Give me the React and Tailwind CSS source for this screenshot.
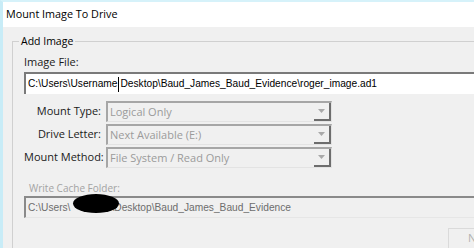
function Combo({ value }) {
  return (
    <div className="flex h-[21px] w-[226px] border-t-2 border-l-2 border-t-[#a6a6a6] border-l-[#a6a6a6] border-b border-r border-b-[#e3e3e3] border-r-[#e3e3e3] bg-[#f0f0f0]">
      <div className="flex-1 pl-[2px] text-[11px] leading-[18px] text-[#9b9b9b]">{value}</div>
      <div className="flex w-[17px] items-center justify-center border-r-2 border-b-2 border-r-[#6d6d6d] border-b-[#6d6d6d] bg-[#f0f0f0]">
        <svg width="7" height="4" viewBox="0 0 7 4">
          <path d="M0 0h7L3.5 4z" fill="#a9a9a9" />
        </svg>
      </div>
    </div>
  )
}

export default function App() {
  const font = { fontFamily: '"Open Sans", "Noto Sans", sans-serif' }
  const mono = { fontFamily: '"Liberation Sans", Arial, sans-serif' }
  return (
    <div className="relative h-[248px] w-[474px] overflow-hidden bg-[#f0f0f0] text-[11px] text-[#1a1a1a]" style={font}>
      <div className="flex h-[27px] items-center border-l-[3px] border-t-2 border-l-[#c8ecf7] border-t-[#d6f2fa] bg-white pl-[3px] text-[10.8px] text-black">
        Mount Image To Drive
      </div>

      <div className="flex h-[221px] border-l-[3px] border-l-[#c8ecf7] pl-[9px] pt-[7px]">
        <fieldset className="w-[520px] shrink-0 border-t border-l border-t-[#d0d0d0] border-l-[#d0d0d0] pl-[11px]">
          <legend className="-ml-[5px] px-[2px] text-[10.5px] leading-[15px] text-black">Add Image</legend>

          <div className="mt-[6px] leading-[14px]">Image File:</div>
          <div className="mt-[3px] flex h-[22px] items-center border-t-2 border-l-2 border-t-[#7a7a7a] border-l-[#7a7a7a] bg-white pl-[2px] text-[10.2px] text-black" style={mono}>
            C:\Users\Username<span className="mx-[1px] inline-block h-[15px] w-px bg-black" />Desktop\Baud_James_Baud_Evidence\roger_image.ad1
          </div>

          <div className="mt-[7px] flex flex-col gap-[2px]">
            <div className="flex items-center">
              <div className="w-[82px] pr-[5px] text-right whitespace-nowrap">Mount Type:</div>
              <Combo value="Logical Only" />
            </div>
            <div className="flex items-center">
              <div className="w-[82px] pr-[5px] text-right whitespace-nowrap">Drive Letter:</div>
              <Combo value="Next Available (E:)" />
            </div>
            <div className="flex items-center">
              <div className="w-[82px] pr-[5px] text-right whitespace-nowrap">Mount Method:</div>
              <Combo value="File System / Read Only" />
            </div>
          </div>

          <div className="mt-[13px] pl-[5px] text-[10px] leading-[14px] text-[#a3a3a3]">Write Cache Folder:</div>
          <div className="relative mt-[1px] flex h-[22px] items-center border-t-2 border-l-2 border-t-[#8a8a8a] border-l-[#8a8a8a] border-b border-b-[#e6e6e6] bg-[#f0f0f0] pl-[2px] text-[10.2px] text-[#6d6d6d]" style={mono}>
            C:\Users\<span className="inline-block w-[41px]" />\Desktop\Baud_James_Baud_Evidence
            <span className="absolute left-[47px] top-[-4px] h-[19px] w-[46px] rounded-[50%] bg-black" />
          </div>

          <div className="mt-[10px] flex">
            <div className="ml-[424px] flex h-[22px] w-[80px] items-center border border-[#dadada] border-b-2 border-b-[#7d7d7d] bg-[#f0f0f0] pl-[19px] text-[#b0b0b0]">
              Next
            </div>
          </div>
        </fieldset>
      </div>
    </div>
  )
}
